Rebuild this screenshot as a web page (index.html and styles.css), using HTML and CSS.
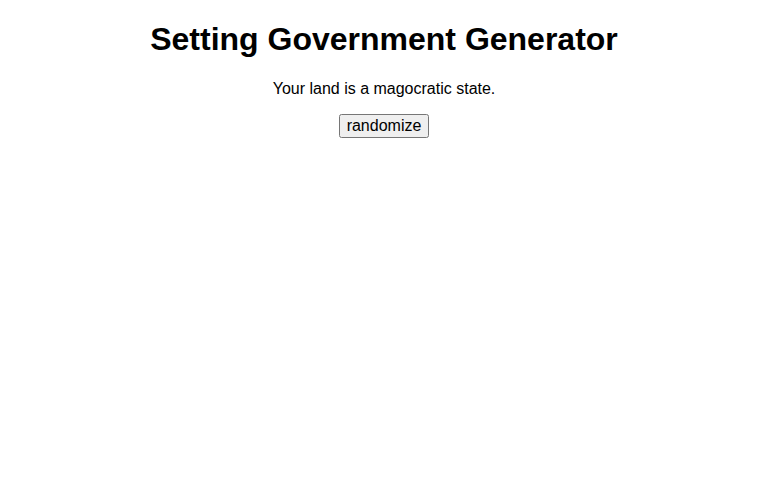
FILE: index.html
```html
<!DOCTYPE html>
<html lang="en">

<head>
    <meta charset="UTF-8">
    <meta name="viewport" content="width=device-width, initial-scale=1.0">
    <title>Setting Government Generator</title>
    <link rel="stylesheet" href="styles.css">
</head>

<body>

    <div class="generator">
        <h1 class="title">Setting Government Generator</h1>
        <p class="result" id="result">Your land is a magocratic state.</p>
        <div class="controls">
            <button class="randomize-btn" id="randomize">randomize</button>
        </div>
    </div>

    <script>
        const governments = [
            "a magocratic state",
            "a theocracy",
            "an absolute monarchy",
            "a merchant republic",
            "an oligarchy",
            "a tribal confederation",
            "a military junta",
            "a democracy"
        ];

        // pick a new government and show it
        document.getElementById('randomize').addEventListener('click', function () {
            const pick = governments[Math.floor(Math.random() * governments.length)];
            document.getElementById('result').textContent = `Your land is ${pick}.`;
        });
    </script>

</body>

</html>
```

FILE: styles.css
```css
body {
    margin: 0 8px 8px;
    font-family: "Liberation Sans", Arial, sans-serif;
    color: black;
    background: white;
}

.generator {
    text-align: center;
}

.title {
    font-size: 32px;
    font-weight: bold;
    margin: 21px 0 22px;
}

.result {
    font-size: 16px;
    margin: 16px 0;
}

.randomize-btn {
    font-family: "Liberation Sans", Arial, sans-serif;
    font-size: 16px;
    padding: 1px 6px;
}
```
